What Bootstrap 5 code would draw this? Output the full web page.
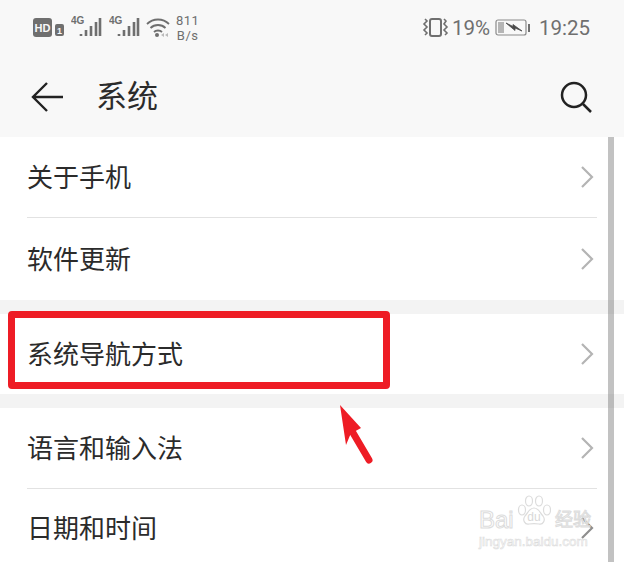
<!DOCTYPE html>
<html lang="zh-CN">
<head>
    <meta charset="UTF-8">
    <meta name="viewport" content="width=device-width, initial-scale=1.0">
    <title>系统</title>
    <link href="https://cdn.jsdelivr.net/npm/bootstrap@5.3.3/dist/css/bootstrap.min.css" rel="stylesheet">
    <style>
        html, body {
            height: 562px;
            overflow: hidden;
        }
        body {
            position: relative;
            background-color: #fff;
            font-family: "Roboto", "Noto Sans CJK SC", sans-serif;
            color: #2b2b2b;
        }
        .top-area {
            height: 137px;
            background-color: #f8f8f8;
        }
        .status-bar {
            height: 56px;
            padding: 13px 34px 0 33px;
            color: #6f6f6f;
        }
        .status-right {
            height: 30px;
        }
        .status-text {
            font-size: 20.5px;
            line-height: 28px;
        }
        .speed-text {
            font-size: 13px;
            line-height: 15px;
            letter-spacing: .5px;
            text-align: center;
            margin-left: 4px;
        }
        .icon-gap {
            margin-left: 6px;
        }
        .tiny-gap {
            margin-left: 2px;
        }
        .batt-gap {
            margin-left: 5px;
        }
        .title-bar {
            height: 81px;
            padding: 0 32px 0 31px;
        }
        .title-text {
            font-size: 31px;
            line-height: 40px;
            margin-left: 33px;
            margin-bottom: 5px;
            font-family: "Noto Sans CJK SC", sans-serif;
        }
        .setting-group {
            padding: 0 27px;
            background-color: #fff;
        }
        .setting-row {
            height: 80px;
            padding-right: 3px;
            font-family: "Noto Sans CJK SC", sans-serif;
            font-size: 26px;
            color: #2b2b2b;
        }
        .setting-row span {
            margin-bottom: 4px;
        }
        .row-line {
            height: 81px;
            border-bottom: 1px solid #e2e2e2;
        }
        .row-two {
            height: 82px;
        }
        .row-last {
            height: 78px;
        }
        .group-gap {
            height: 14px;
            background-color: #f3f3f3;
        }
        .scroll-thumb {
            position: absolute;
            left: 608px;
            top: 137px;
            width: 6px;
            height: 425px;
            background-color: rgba(120, 120, 120, .45);
        }
        .red-box {
            position: absolute;
            left: 8px;
            top: 311px;
            width: 382px;
            height: 78px;
            border: 7px solid #ee1c25;
            border-radius: 4px;
        }
        .red-arrow {
            position: absolute;
            left: 335px;
            top: 400px;
        }
        .wm-box {
            position: absolute;
            left: 479px;
            top: 495px;
            width: 112px;
            height: 56px;
            color: transparent;
            -webkit-text-stroke: 1px #dcdcdc;
            font-family: "Liberation Sans", "Noto Sans CJK SC", sans-serif;
        }
        .wm-main {
            font-size: 24px;
            line-height: 26px;
            padding-top: 12px;
            white-space: nowrap;
        }
        .wm-cn {
            font-size: 18px;
        }
        .wm-url {
            font-size: 13.5px;
            line-height: 18px;
            -webkit-text-stroke: .6px #dcdcdc;
            white-space: nowrap;
        }
        .wm-paw {
            position: absolute;
            left: 38px;
            top: 0;
        }
    </style>
</head>
<body>

    <div class="top-area">
        <div class="status-bar d-flex align-items-start">
            <svg width="32" height="20" viewBox="0 0 32 20" class="mt-1">
                <rect x="0" y="1" width="19" height="19" rx="3" fill="#6f6f6f"/>
                <text x="9.5" y="15" text-anchor="middle" font-family="Liberation Sans" font-weight="700" font-size="11" fill="#f8f8f8">HD</text>
                <rect x="22" y="7" width="9" height="12" rx="2" fill="#6f6f6f"/>
                <text x="26.5" y="17" text-anchor="middle" font-family="Liberation Sans" font-weight="700" font-size="9" fill="#f8f8f8">1</text>
            </svg>
            <svg width="32" height="26" viewBox="0 0 32 26" class="icon-gap">
                <text x="0" y="11" font-family="Liberation Sans" font-weight="700" font-size="10" fill="#6f6f6f">4G</text>
                <path d="M12 23v-2M17 23v-6M22 23v-10M27 23v-14M31 23v-18" stroke="#6f6f6f" stroke-width="2.600" fill="none" transform="translate(-2 0)"/>
            </svg>
            <svg width="32" height="26" viewBox="0 0 32 26" class="icon-gap">
                <text x="0" y="11" font-family="Liberation Sans" font-weight="700" font-size="10" fill="#6f6f6f">4G</text>
                <path d="M12 23v-2M17 23v-6M22 23v-10M27 23v-14M31 23v-18" stroke="#6f6f6f" stroke-width="2.600" fill="none" transform="translate(-2 0)"/>
            </svg>
            <svg width="26" height="24" viewBox="0 0 26 24" class="batt-gap mt-1">
                <path d="M1 7c6-6 16-6 22 0M4.500 11c4-4 11-4 15 0M8 15c2-2 6-2 8 0" stroke="#6f6f6f" stroke-width="1.800" fill="none"/>
                <circle cx="11" cy="18" r="2" fill="#6f6f6f"/>
                <path d="M15 18l3-2v4zM19 18l3-2v4z" fill="#bbb"/>
            </svg>
            <div class="speed-text">811<br>B/s</div>
            <div class="status-right ms-auto d-flex align-items-center">
                <svg width="30" height="24" viewBox="0 0 30 24">
                    <rect x="10" y="3" width="11" height="17" rx="2" stroke="#6f6f6f" stroke-width="2" fill="none"/>
                    <path d="M5 3l2 2-3 3 3 3-3 3 3 3-2 2M24 3l2 2-2 3 3 3-3 3 3 3-2 2" stroke="#6f6f6f" stroke-width="1.600" fill="none"/>
                </svg>
                <span class="status-text tiny-gap">19%</span>
                <svg width="36" height="18" viewBox="0 0 36 18" class="batt-gap">
                    <rect x="1" y="1" width="30" height="15" rx="2" stroke="#8a8a8a" stroke-width="1.200" fill="none"/>
                    <rect x="3" y="3" width="6" height="11" fill="#b5b5b5"/>
                    <path d="M11 4l7 3.500v-2l9 6.500-7-3v2.500z" fill="#4a4a4a" stroke="#4a4a4a" stroke-width=".8"/>
                    <rect x="33" y="5" width="2" height="8" fill="#6f6f6f"/>
                </svg>
                <span class="status-text ms-2">19:25</span>
            </div>
        </div>
        <div class="title-bar d-flex align-items-center">
            <svg width="32" height="32" viewBox="0 0 32 32">
                <path d="M16 2L2 16l14 14M2 16h30" stroke="#222" stroke-width="2.400" fill="none"/>
            </svg>
            <span class="title-text">系统</span>
            <svg width="32" height="32" viewBox="0 0 32 32" class="ms-auto">
                <circle cx="14" cy="14" r="12" stroke="#222" stroke-width="2.500" fill="none"/>
                <path d="M23 23l8 8" stroke="#222" stroke-width="2.500"/>
            </svg>
        </div>
    </div>

    <div class="setting-group">
        <div class="setting-row row-line d-flex align-items-center justify-content-between">
            <span>关于手机</span>
            <svg width="14" height="22" viewBox="0 0 14 22"><path d="M2 1l10 10L2 21" stroke="#b4b4b4" stroke-width="2.200" fill="none"/></svg>
        </div>
        <div class="setting-row row-two d-flex align-items-center justify-content-between">
            <span>软件更新</span>
            <svg width="14" height="22" viewBox="0 0 14 22"><path d="M2 1l10 10L2 21" stroke="#b4b4b4" stroke-width="2.200" fill="none"/></svg>
        </div>
    </div>
    <div class="group-gap"></div>
    <div class="setting-group">
        <div class="setting-row d-flex align-items-center justify-content-between">
            <span>系统导航方式</span>
            <svg width="14" height="22" viewBox="0 0 14 22"><path d="M2 1l10 10L2 21" stroke="#b4b4b4" stroke-width="2.200" fill="none"/></svg>
        </div>
    </div>
    <div class="group-gap"></div>
    <div class="setting-group">
        <div class="setting-row row-line d-flex align-items-center justify-content-between">
            <span>语言和输入法</span>
            <svg width="14" height="22" viewBox="0 0 14 22"><path d="M2 1l10 10L2 21" stroke="#b4b4b4" stroke-width="2.200" fill="none"/></svg>
        </div>
        <div class="setting-row row-last d-flex align-items-center justify-content-between">
            <span>日期和时间</span>
            <svg width="14" height="22" viewBox="0 0 14 22"><path d="M2 1l10 10L2 21" stroke="#8e8e8e" stroke-width="2.200" fill="none"/></svg>
        </div>
    </div>

    <div class="scroll-thumb"></div>
    <div class="red-box"></div>
    <svg class="red-arrow" width="44" height="68" viewBox="0 0 44 68">
        <path d="M5 5l21 23-9 5-1 0-5 12z" fill="#ee1c25"/>
        <path d="M14 26l20 34" stroke="#ee1c25" stroke-width="7" stroke-linecap="round"/>
    </svg>

    <div class="wm-box">
        <svg class="wm-paw" width="34" height="34" viewBox="0 0 34 34">
            <g fill="none" stroke="#dcdcdc" stroke-width="1.200">
                <ellipse cx="5" cy="15" rx="3.500" ry="5"/>
                <ellipse cx="12" cy="6" rx="3.500" ry="5"/>
                <ellipse cx="22" cy="6" rx="3.500" ry="5"/>
                <ellipse cx="30" cy="15" rx="3.500" ry="5"/>
                <path d="M17 13c-5 0-6 5-9 8-3 4 0 9 4 8 3-.5 7-.5 10 0 4 1 7-4 4-8-3-3-4-8-9-8z"/>
            </g>
            <text x="17" y="26" text-anchor="middle" font-family="Liberation Sans" font-size="12" stroke="none" fill="#d8d8d8">du</text>
        </svg>
        <div class="wm-main d-flex justify-content-between"><span>Bai</span><span class="wm-cn">经验</span></div>
        <div class="wm-url">jingyan.baidu.com</div>
    </div>

    <script src="https://cdn.jsdelivr.net/npm/bootstrap@5.3.3/dist/js/bootstrap.bundle.min.js"></script>
</body>
</html>
